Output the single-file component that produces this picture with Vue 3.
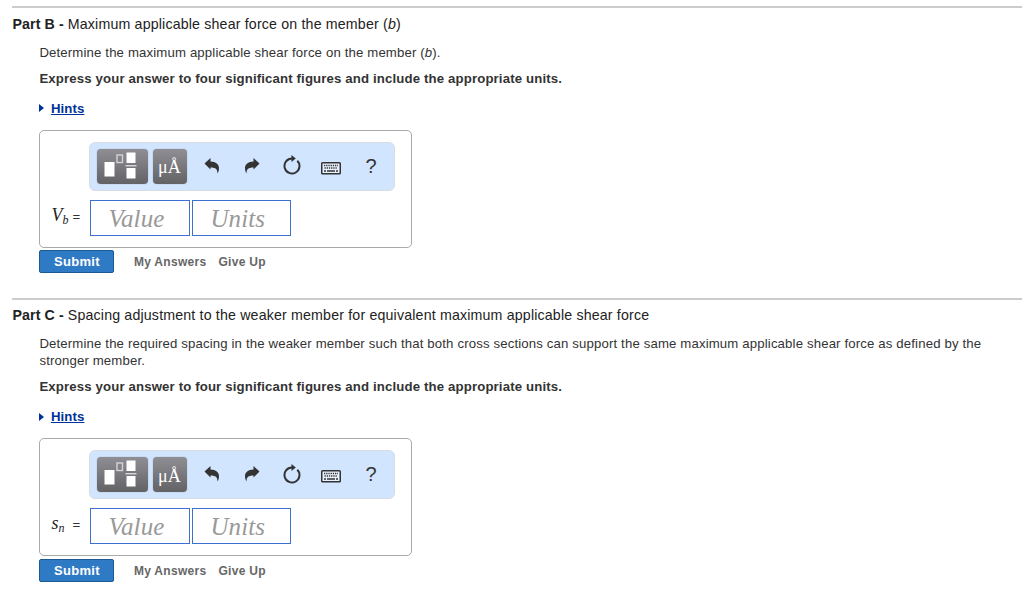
<template>
  <main class="page">
    <section v-for="part in parts" :key="part.id" :class="['part', part.id]">
      <h2 class="part-title">
        <b>{{ part.label }} - </b>{{ part.title }}<template v-if="part.member"> (<i>{{ part.member }}</i>)</template>
      </h2>
      <div class="part-body">
        <p class="description">
          {{ part.description }}<template v-if="part.member"> (<i>{{ part.member }}</i>).</template>
        </p>
        <p class="instruction">{{ instruction }}</p>
        <div class="hints">
          <span class="hint-arrow"></span>
          <a class="hint-link">Hints</a>
        </div>

        <div class="answer-panel">
          <div class="toolbar">
            <button class="tool-dark template-tool" aria-label="Templates">
              <svg width="51" height="35" viewBox="0 0 51 35">
                <rect x="7.500" y="13" width="10" height="14.500" fill="#fff" />
                <rect x="20" y="6" width="5.500" height="7.500" fill="none" stroke="#d4d4d8" stroke-width="1.400" />
                <rect x="29.500" y="3.500" width="9" height="10.500" fill="#fff" />
                <rect x="28.500" y="16" width="11" height="1.500" fill="#d4d4d8" />
                <rect x="29.500" y="19" width="9" height="10.500" fill="#fff" />
              </svg>
            </button>
            <button class="tool-dark symbol-tool">μÅ</button>
            <button class="tool undo" aria-label="Undo">
              <svg width="16" height="16" viewBox="0 0 16 16">
                <path d="M0.500 5.500 6.500 0V3.500c5.500 0 8.500 3 8.500 6.500 0 2-.5 4-1.500 5.500 0-4-1.500-6-7-6v2z" />
              </svg>
            </button>
            <button class="tool redo" aria-label="Redo">
              <svg width="16" height="16" viewBox="0 0 16 16">
                <path d="M15.500 5.500 9.500 0V3.500c-5.500 0-8.500 3-8.500 6.500 0 2 .5 4 1.500 5.500 0-4 1.500-6 7-6v2z" />
              </svg>
            </button>
            <button class="tool reset" aria-label="Reset">
              <svg width="18" height="20" viewBox="0 0 18 20">
                <path d="M14.300 5.700A7.500 7.500 0 1 1 9 3.500h1" fill="none" stroke="#333" stroke-width="2" />
                <path d="M8.500 0 12.800 3.600 8.500 7z" />
              </svg>
            </button>
            <button class="tool keyboard" aria-label="Keyboard shortcuts">
              <svg width="20" height="13" viewBox="0 0 20 13">
                <rect x=".75" y=".75" width="18.500" height="11" rx=".8" fill="#e9f2ff" stroke="#333" stroke-width="1.500" />
                <path d="M3 3.500h14M3.500 6h13" fill="none" stroke="#333" stroke-width="1.500" stroke-dasharray="1.300 .9" />
                <path d="M3 9h2M6 9h8M15 9h2" fill="none" stroke="#333" stroke-width="1.500" />
              </svg>
            </button>
            <button class="tool help">?</button>
          </div>
          <div class="answer-row">
            <span class="variable"><i>{{ part.symbol }}<sub>{{ part.subscript }}</sub></i></span>
            <span class="equals">=</span>
            <div class="answer-box value">Value</div>
            <div class="answer-box units">Units</div>
          </div>
        </div>

        <div class="actions">
          <button class="submit">Submit</button>
          <a class="action my-answers">My Answers</a>
          <a class="action">Give Up</a>
        </div>
      </div>
    </section>
  </main>
</template>

<script setup>
const instruction =
  "Express your answer to four significant figures and include the appropriate units.";

const parts = [
  {
    id: "part-b",
    label: "Part B",
    title: "Maximum applicable shear force on the member",
    description: "Determine the maximum applicable shear force on the member",
    member: "b",
    symbol: "V",
    subscript: "b",
  },
  {
    id: "part-c",
    label: "Part C",
    title:
      "Spacing adjustment to the weaker member for equivalent maximum applicable shear force",
    description:
      "Determine the required spacing in the weaker member such that both cross sections can support the same maximum applicable shear force as defined by the stronger member.",
    symbol: "s",
    subscript: "n",
  },
];
</script>

<style>
body {
  background: #fff;
}
</style>

<style scoped>
.page {
  box-sizing: border-box;
  width: 1024px;
  height: 597px;
  overflow: hidden;
  padding: 6px 2px 0 12px;
  font-family: "Liberation Sans", Arial, sans-serif;
  font-size: 13.2px;
  color: #333;
}

.part {
  border-top: 2px solid #ccc;
}
.part-b {
  height: 289.5px;
}

button {
  padding: 0;
  border: none;
  background: none;
  font-family: inherit;
}

.part-title {
  margin: 0;
  padding: 6.5px 0 0.5px 0.5px;
  font-size: 14.2px;
  font-weight: normal;
  line-height: 18px;
  letter-spacing: 0.17px;
  color: #222;
}
.part-title b {
  letter-spacing: 0.1px;
}

.part-body {
  padding-left: 27.4px;
}

.description,
.instruction {
  margin: 0;
  width: 960px;
  line-height: 17px;
  letter-spacing: 0.145px;
}
.description {
  padding-top: 10.5px;
}
.instruction {
  padding-top: 9.3px;
  font-weight: bold;
}

.hints {
  display: flex;
  align-items: center;
  height: 17px;
  margin-top: 12.9px;
}
.hint-arrow {
  border: 4px solid transparent;
  border-left: 5px solid #039;
  border-right: none;
  margin-right: 6.5px;
}
.hint-link {
  font-weight: bold;
  letter-spacing: 0.1px;
  color: #039;
  text-decoration: underline;
}

.answer-panel {
  box-sizing: border-box;
  width: 373px;
  height: 118px;
  margin-top: 13px;
  border: 1px solid #aaa;
  border-radius: 5px;
  padding: 11px 0 0 49px;
}

.toolbar {
  box-sizing: border-box;
  display: flex;
  align-items: center;
  width: 306px;
  height: 49px;
  padding-left: 7px;
  border: 1px solid #d8dce2;
  border-radius: 6px;
  background: #d1e5ff;
}

.tool-dark {
  width: 51px;
  height: 35px;
  border-radius: 4px;
  background: linear-gradient(#8e8e94, #636366);
  box-shadow: 0 0 1px #777;
}
.tool-dark svg {
  display: block;
}
.symbol-tool {
  width: 34px;
  margin-left: 5px;
  padding: 3px 2px 0 0;
  font-family: "Liberation Serif", serif;
  font-size: 18px;
  color: #fff;
}

.tool {
  display: flex;
  align-items: center;
  justify-content: center;
  width: 39.7px;
  height: 24px;
  color: #333;
  fill: #333;
}
.undo {
  margin-left: 5px;
}
.undo svg,
.redo svg {
  margin-top: -1px;
}
.reset svg {
  margin-top: -2px;
}
.keyboard {
  padding-top: 4px;
}
.help {
  font-size: 20px;
}

.answer-row {
  display: flex;
  align-items: flex-start;
  margin: 9px 0 0 -38px;
}
.variable {
  width: 21px;
  padding-top: 5px;
  font-family: "Liberation Serif", serif;
  font-size: 18px;
  line-height: 20px;
  color: #222;
}
.variable sub {
  font-size: 12px;
  line-height: 0;
  vertical-align: -3px;
}
.equals {
  width: 18px;
  padding-top: 8px;
  line-height: 17px;
}
.answer-box {
  box-sizing: border-box;
  width: 100px;
  height: 36px;
  margin-right: 2px;
  border: 1px solid #3b6fd0;
  padding-left: 17px;
  font-family: "Liberation Serif", serif;
  font-size: 25px;
  font-style: italic;
  line-height: 35px;
  letter-spacing: 0.1px;
  color: #999;
}
.units {
  width: 99px;
}

.actions {
  display: flex;
  align-items: center;
  margin-top: 2.4px;
}
.submit {
  width: 75px;
  height: 23px;
  border: 1px solid #1c5a96;
  border-radius: 2px;
  background: #2f7ac4;
  font-size: 13px;
  font-weight: bold;
  letter-spacing: 0.3px;
  color: #fff;
}
.action {
  margin-left: 12px;
  padding-top: 1px;
  font-size: 12px;
  font-weight: bold;
  letter-spacing: 0.3px;
  color: #666;
}
.my-answers {
  margin-left: 19.5px;
}
</style>
